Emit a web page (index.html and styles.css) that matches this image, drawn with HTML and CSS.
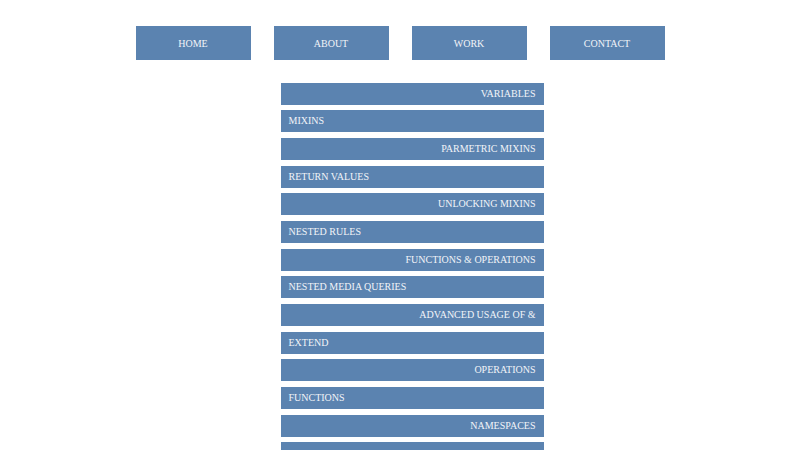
FILE: index.html
```html
<!DOCTYPE html>
<html>
<head>
<meta charset="utf-8">
<link rel="stylesheet" href="styles.css">
</head>
<body>
<nav class="nav">
  <a class="nav-btn">HOME</a>
  <a class="nav-btn">ABOUT</a>
  <a class="nav-btn">WORK</a>
  <a class="nav-btn">CONTACT</a>
</nav>
<ul class="list">
  <li class="item right">VARIABLES</li>
  <li class="item">MIXINS</li>
  <li class="item right">PARMETRIC MIXINS</li>
  <li class="item">RETURN VALUES</li>
  <li class="item right">UNLOCKING MIXINS</li>
  <li class="item">NESTED RULES</li>
  <li class="item right">FUNCTIONS &amp; OPERATIONS</li>
  <li class="item">NESTED MEDIA QUERIES</li>
  <li class="item right">ADVANCED USAGE OF &amp;</li>
  <li class="item">EXTEND</li>
  <li class="item right">OPERATIONS</li>
  <li class="item">FUNCTIONS</li>
  <li class="item right">NAMESPACES</li>
  <li class="item"></li>
</ul>
</body>
</html>
```
FILE: styles.css
```css
html, body {
  margin: 0;
  padding: 0;
  background: #ffffff;
  font-family: "Liberation Serif", "Times New Roman", serif;
  font-size: 10px;
  color: #f2f4f8;
}
.nav {
  display: flex;
  justify-content: center;
  gap: 23px;
  padding-top: 26px;
}
.nav-btn {
  width: 115px;
  height: 34px;
  line-height: 35px;
  background: #5b83b0;
  text-align: center;
  color: #f2f4f8;
}
.list {
  list-style: none;
  width: 263px;
  margin: 22.5px auto 0;
  padding: 0 0 0 24px;
  display: flex;
  flex-direction: column;
  gap: 5.7px;
}
.item {
  height: 22px;
  padding: 0 8px;
  line-height: 21.5px;
  background: #5b83b0;
  text-align: left;
  white-space: nowrap;
  overflow: hidden;
}
.item.right {
  text-align: right;
}
```
